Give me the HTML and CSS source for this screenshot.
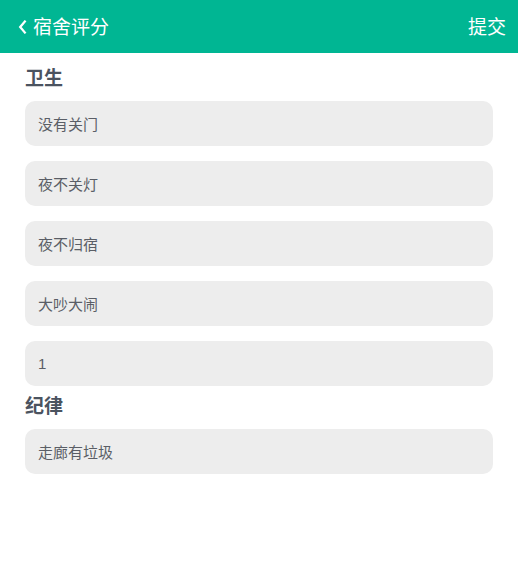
FILE: index.html
```html
<!DOCTYPE html>
<html lang="zh">
<head>
<meta charset="utf-8">
<title>宿舍评分</title>
<link rel="stylesheet" href="styles.css">
</head>
<body>
<header class="topbar">
  <div class="back">
    <svg class="chev" width="10" height="16" viewBox="0 0 10 16"><path d="M7.8 2.5 L3.2 8 L7.8 13.5" fill="none" stroke="#fff" stroke-width="2.3" stroke-linecap="square"/></svg>
    <span class="title">宿舍评分</span>
  </div>
  <span class="submit">提交</span>
</header>
<main class="content">
  <section class="group">
    <h2 class="group-title">卫生</h2>
    <div class="items">
      <div class="item">没有关门</div>
      <div class="item">夜不关灯</div>
      <div class="item">夜不归宿</div>
      <div class="item">大吵大闹</div>
      <div class="item">1</div>
    </div>
  </section>
  <section class="group">
    <h2 class="group-title">纪律</h2>
    <div class="items">
      <div class="item">走廊有垃圾</div>
    </div>
  </section>
</main>
</body>
</html>
```
FILE: styles.css
```css
* { box-sizing: border-box; }
html, body { margin: 0; padding: 0; background: #fff; }
body { font-family: "Liberation Sans", Arial, "Noto Sans CJK SC", sans-serif; }
.topbar {
  height: 53px;
  background: #00b693;
  color: #fff;
  display: flex;
  align-items: center;
  justify-content: space-between;
  padding: 0 12px 2px 17px;
}
.back { display: flex; align-items: center; gap: 6px; }
.chev { display: block; margin-top: 3px; }
.title { font-size: 19px; }
.submit { font-size: 19px; }
.content { padding: 5px 25px 0; }
.group-title {
  margin: 0;
  height: 43px;
  line-height: 41px;
  font-size: 19px;
  font-weight: bold;
  color: #4b535f;
}
.items { display: flex; flex-direction: column; gap: 15px; }
.item {
  height: 45px;
  border-radius: 10px;
  background: #ededed;
  display: flex;
  align-items: center;
  padding: 0 13px;
  font-size: 15px;
  color: #5a5e66;
}
```
